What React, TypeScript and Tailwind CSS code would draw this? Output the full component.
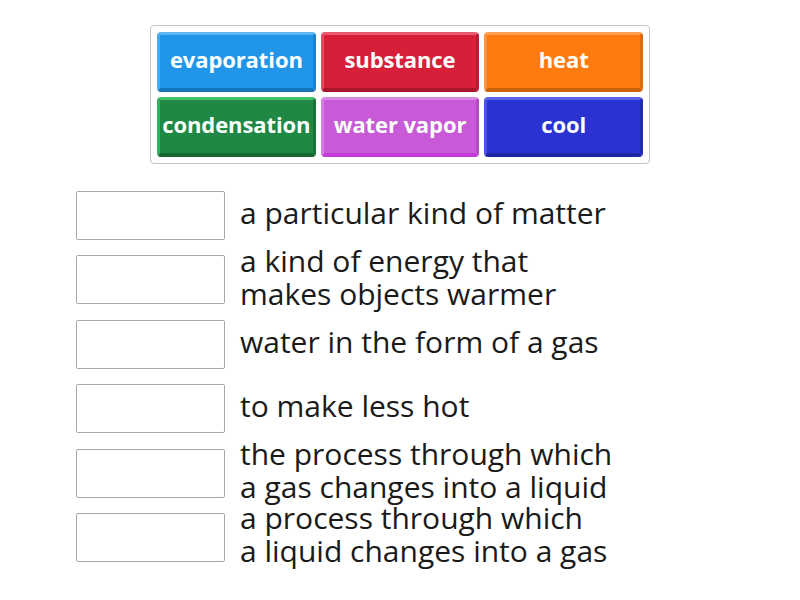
import React from 'react';

type Tile = { label: string; cls: string };

const tiles: Tile[] = [
    { label: 'evaporation', cls: 'bg-[#2196e8] border-t-[#5cb6f2] border-l-[#4aaaf0] border-r-[#1a82cc] border-b-[#1576bd]' },
    { label: 'substance', cls: 'bg-[#d81f3a] border-t-[#e85a6e] border-l-[#e24a60] border-r-[#bb1a31] border-b-[#a8172b]' },
    { label: 'heat', cls: 'bg-[#ff7b10] border-t-[#ffa050] border-l-[#ff9440] border-r-[#e06a0a] border-b-[#cc6008]' },
    { label: 'condensation', cls: 'bg-[#1f8845] border-t-[#3fc46c] border-l-[#36b060] border-r-[#1a743a] border-b-[#166632]' },
    { label: 'water vapor', cls: 'bg-[#c85ad8] border-t-[#d98ae4] border-l-[#d37ee0] border-r-[#b44bc4] border-b-[#c23bd6]' },
    { label: 'cool', cls: 'bg-[#2a33d2] border-t-[#5a63e6] border-l-[#4a54e0] border-r-[#2229b4] border-b-[#1e26a6]' },
];

const rows: string[][] = [
    ['a particular kind of matter'],
    ['a kind of energy that', 'makes objects warmer'],
    ['water in the form of a gas'],
    ['to make less hot'],
    ['the process through which', 'a gas changes into a liquid'],
    ['a process through which', 'a liquid changes into a gas'],
];

const App: React.FC = () => {
    return (
        <div className="w-[800px] h-[600px] bg-white" style={{ fontFamily: '"Open Sans", sans-serif' }}>
            <div className="pt-[25px] flex justify-center">
                <div className="w-[500px] border border-[#c4c4c4] rounded-[4px] p-[6px] grid grid-cols-3 gap-[5px] bg-white">
                    {tiles.map((t) => (
                        <div
                            key={t.label}
                            className={`h-[60px] rounded-[4px] border-[3px] border-b-[4px] pb-[4px] flex items-center justify-center text-[#fbfffb] font-bold text-[22px] tracking-[-0.1px] whitespace-nowrap ${t.cls}`}
                        >
                            {t.label}
                        </div>
                    ))}
                </div>
            </div>

            <div className="mt-[27px] ml-[76px] flex flex-col gap-[15.4px]">
                {rows.map((lines, i) => (
                    <div key={i} className="flex items-center h-[49px]">
                        <div className="w-[149px] h-[49px] border border-[#a8a8a8] rounded-[2px] bg-white shrink-0" />
                        <div className="ml-[15px] -mt-[6px] text-[30px] leading-[33px] text-[#1a1a1a] whitespace-nowrap">
                            {lines.map((l) => (
                                <div key={l}>{l}</div>
                            ))}
                        </div>
                    </div>
                ))}
            </div>
        </div>
    );
};

export default App;
